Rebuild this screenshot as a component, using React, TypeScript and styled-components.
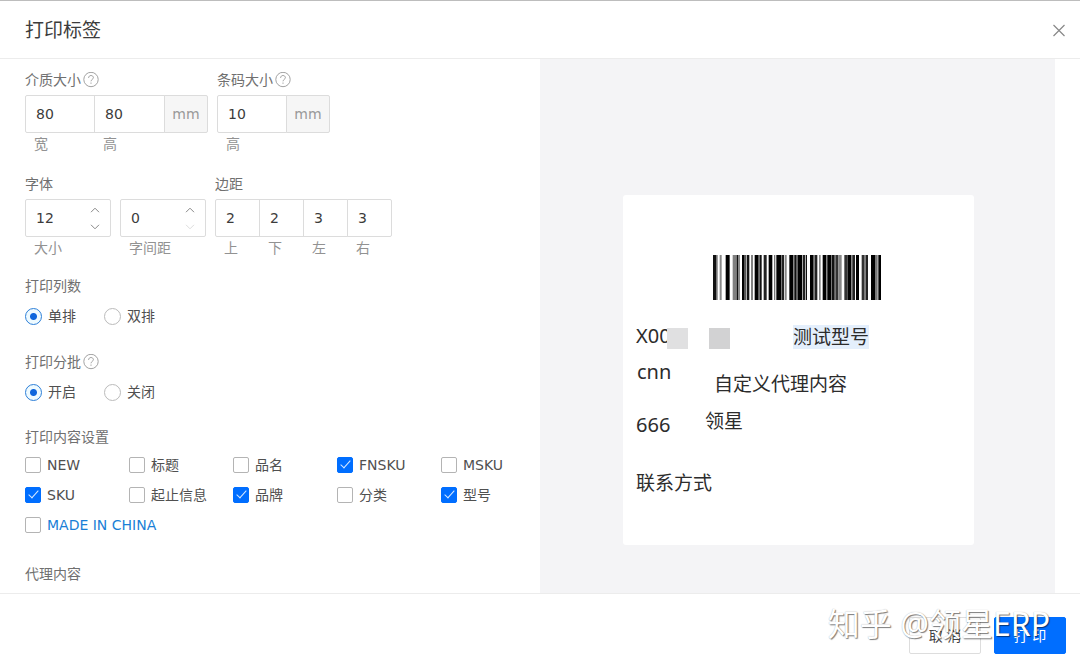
import React, { useState } from "react";
import styled, { createGlobalStyle } from "styled-components";

const uiFont = `"DejaVu Sans", "Noto Sans CJK SC", sans-serif`;
const labelFont = `"Noto Sans", "Noto Sans CJK SC", sans-serif`;
const blue = "#006eff";
const line = "#dcdcdc";

const GlobalStyle = createGlobalStyle`
  *, *::before, *::after { box-sizing: border-box; }
  body { margin: 0; background: #fff; font: 14px/22px ${uiFont}; color: #505050; }
  button, input { font: inherit; color: inherit; }
`;

const Dialog = styled.div`
  display: flex;
  flex-direction: column;
  height: 100vh;
  overflow: hidden;
  border-top: 1px solid #bdbdbd;
`;

const Header = styled.header`
  display: flex;
  align-items: center;
  justify-content: space-between;
  height: 58px;
  flex: none;
  padding: 0 14px 0 25px;
  border-bottom: 1px solid #ececec;
`;

const Title = styled.h1`
  margin: 0;
  font: 400 19px/28px ${labelFont};
  color: #3c3c3c;
`;

const CloseButton = styled.button`
  display: flex;
  padding: 0;
  border: 0;
  background: none;
  color: #888;
`;

const Body = styled.div`
  display: flex;
  flex: 1;
  min-height: 0;
`;

const Form = styled.form`
  flex: 0 0 50%;
  padding: 10px 25px 0;
  overflow: hidden;
`;

const Preview = styled.section`
  flex: 1;
  margin-right: 25px;
  padding: 136px 0 0 2px;
  background: #f4f4f6;
`;

const Section = styled.section<{ $gap: number }>`
  margin-bottom: ${(p) => p.$gap}px;
`;

const Row = styled.div<{ $gap?: number }>`
  display: flex;
  gap: ${(p) => p.$gap ?? 9}px;
`;

const Heading = styled.div<{ $space?: number }>`
  display: flex;
  align-items: center;
  gap: 2px;
  height: 22px;
  margin-bottom: ${(p) => p.$space ?? 4}px;
  color: #707070;
`;

const Group = styled.div`
  display: flex;
  align-items: flex-start;
`;

const Cell = styled.label<{ $width: number }>`
  display: block;
  width: ${(p) => p.$width}px;
  & + & { margin-left: -1px; }
  &:first-child input { border-radius: 2px 0 0 2px; }
  &:last-child input { border-radius: 0 2px 2px 0; }
`;

const TextInput = styled.input`
  display: block;
  width: 100%;
  height: 38px;
  padding: 0 10px;
  border: 1px solid ${line};
  border-radius: 0;
  background: #fff;
  color: #3c3c3c;
  outline: 0;
`;

const Caption = styled.span`
  display: block;
  padding-left: 9px;
  color: #929292;
  white-space: nowrap;
`;

const Unit = styled.span`
  display: flex;
  align-items: center;
  justify-content: center;
  width: 44px;
  height: 38px;
  margin-left: -1px;
  border: 1px solid ${line};
  border-radius: 0 2px 2px 0;
  background: #f6f6f6;
  color: #999;
`;

const StepperBox = styled.div`
  display: flex;
  width: 86px;
  height: 38px;
  border: 1px solid ${line};
  border-radius: 2px;
`;

const StepperInput = styled.input`
  width: 60px;
  padding: 0 0 0 10px;
  border: 0;
  background: none;
  color: #3c3c3c;
  outline: 0;
`;

const StepperArrows = styled.div`
  display: flex;
  flex-direction: column;
  justify-content: center;
`;

const ArrowButton = styled.button`
  display: flex;
  align-items: center;
  height: 17px;
  padding: 0 4px;
  border: 0;
  background: none;
  color: #888;
  &:disabled { color: #ddd; }
`;

const Choice = styled.label<{ $link?: boolean; $width?: number }>`
  display: flex;
  align-items: center;
  gap: 6px;
  width: ${(p) => (p.$width ? `${p.$width}px` : "auto")};
  color: ${(p) => (p.$link ? "#1a7fd6" : "#505050")};
  white-space: nowrap;
`;

const Radio = styled.input`
  appearance: none;
  flex: none;
  width: 17px;
  height: 17px;
  margin: 0;
  border: 1px solid #bbb;
  border-radius: 50%;
  background: #fff;
  &:checked {
    border-color: #2d7fd8;
    background: radial-gradient(circle, #0f66dc 3px, #eefaff 4px);
  }
`;

const Checkbox = styled.input`
  appearance: none;
  display: flex;
  justify-content: center;
  flex: none;
  width: 16px;
  height: 16px;
  margin: 0;
  border: 1px solid #b4b4b4;
  border-radius: 2px;
  background: #fff;
  &:checked { border-color: ${blue}; background: ${blue}; }
  &:checked::after {
    content: "";
    width: 5px;
    height: 10px;
    border: solid #d8eaff;
    border-width: 0 1px 1px 0;
    transform: rotate(42deg);
  }
`;

const CheckGrid = styled.div`
  display: grid;
  grid-template-columns: repeat(5, 104px);
  grid-auto-rows: 30px;
`;

const LabelCard = styled.div`
  position: relative;
  width: 351px;
  height: 350px;
  margin: 0 auto;
  border-radius: 3px;
  background: #fff;
  color: #2c2c2c;
`;

const Placed = styled.div<{ $x: number; $y: number }>`
  position: absolute;
  left: ${(p) => p.$x}px;
  top: ${(p) => p.$y}px;
`;

const CardText = styled(Placed)<{ $selected?: boolean; $latin?: boolean }>`
  font: ${(p) => (p.$latin ? 20 : 19)}px/24px ${labelFont};
  white-space: nowrap;
  background: ${(p) => (p.$selected ? "#e4effc" : "transparent")};
`;

const Mask = styled(Placed)<{ $color: string }>`
  width: 21px;
  height: 21px;
  background: ${(p) => p.$color};
`;

const Footer = styled.footer`
  position: relative;
  display: flex;
  align-items: flex-start;
  justify-content: flex-end;
  gap: 13px;
  flex: none;
  height: 77px;
  padding: 23px 14px 0;
  border-top: 1px solid #ececec;
`;

const FooterButton = styled.button<{ $primary?: boolean }>`
  width: 72px;
  height: 37px;
  padding: 0;
  border: 1px solid ${(p) => (p.$primary ? blue : "#ddd")};
  border-radius: 2px;
  background: ${(p) => (p.$primary ? blue : "#fff")};
  color: ${(p) => (p.$primary ? "#fff" : "#444")};
`;

const Watermark = styled.div`
  position: absolute;
  right: 30px;
  top: 8px;
  font: 32px/44px ${labelFont};
  color: #fff;
  text-shadow: 1px 1px 1px rgba(0, 0, 0, 0.5), 0 0 1px rgba(0, 0, 0, 0.3);
  white-space: nowrap;
  pointer-events: none;
`;

const HelpIcon = () => (
  <svg width="16" height="16" viewBox="0 0 16 16" fill="none" stroke="#a2a2a2" aria-hidden="true">
    <circle cx="8" cy="7.500" r="7.200" />
    <path d="M5.600 5.900c0-1.500 1.100-2.400 2.400-2.400s2.400.9 2.400 2.200c0 1.600-2.400 1.800-2.400 3.600" />
    <path d="M8 10.500v1.300" />
  </svg>
);

const Chevron = ({ down = false }: { down?: boolean }) => (
  <svg width="10" height="6" viewBox="0 0 10 6" fill="none" stroke="currentColor" aria-hidden="true">
    <path d={down ? "M1 .8l4 4 4-4" : "M1 5.200l4-4 4 4"} />
  </svg>
);

const bars: [number, number, string][] = [
  [0, 9, "#111"], [9, 5, "#777"], [20, 6, "#888"], [38, 12, "#000"], [59, 12, "#808080"],
  [71, 4, "#111"], [75, 6, "#888"], [87, 8, "#000"], [95, 4, "#555"], [101, 8, "#111"],
  [115, 4, "#444"], [125, 12, "#000"], [137, 3, "#777"], [140, 6, "#111"], [152, 9, "#222"],
  [167, 11, "#000"], [183, 4, "#777"], [190, 14, "#000"], [204, 3, "#777"], [207, 6, "#222"],
  [215, 6, "#888"], [229, 12, "#000"], [241, 3, "#777"], [244, 7, "#111"], [251, 4, "#666"],
  [255, 13, "#000"], [270, 6, "#222"], [278, 4, "#111"], [291, 11, "#000"], [302, 3, "#888"],
  [305, 8, "#222"], [318, 5, "#888"], [329, 11, "#000"], [340, 3, "#777"], [343, 11, "#000"],
  [354, 3, "#777"], [357, 8, "#111"], [367, 9, "#333"], [376, 10, "#888"], [394, 8, "#333"],
  [403, 12, "#000"], [415, 3, "#777"], [418, 8, "#222"], [429, 9, "#000"], [446, 9, "#333"],
  [455, 3, "#888"], [458, 7, "#222"], [474, 12, "#000"], [486, 8, "#777"], [496, 8, "#000"],
];

const Barcode = () => (
  <svg width="168" height="45" viewBox="0 0 504 132" preserveAspectRatio="none" display="block" role="img" aria-label="FNSKU">
    {bars.map(([x, w, fill]) => (
      <rect key={x} x={x} width={w} height="132" fill={fill} />
    ))}
  </svg>
);

const Field = ({ value, caption, width }: { value: string; caption: string; width: number }) => (
  <Cell $width={width}>
    <TextInput type="text" inputMode="numeric" defaultValue={value} />
    <Caption>{caption}</Caption>
  </Cell>
);

const Stepper = ({ id, initial, caption }: { id: string; initial: number; caption: string }) => {
  const [value, setValue] = useState(initial);
  return (
    <div>
      <StepperBox>
        <StepperInput
          id={id}
          type="text"
          inputMode="numeric"
          value={value}
          onChange={(e) => setValue(Number(e.target.value) || 0)}
        />
        <StepperArrows>
          <ArrowButton type="button" aria-label={`${caption} +`} onClick={() => setValue(value + 1)}>
            <Chevron />
          </ArrowButton>
          <ArrowButton type="button" aria-label={`${caption} -`} disabled={value <= 0} onClick={() => setValue(value - 1)}>
            <Chevron down />
          </ArrowButton>
        </StepperArrows>
      </StepperBox>
      <Caption as="label" htmlFor={id}>{caption}</Caption>
    </div>
  );
};

const RadioPair = ({ name, options }: { name: string; options: string[] }) => (
  <Row $gap={0} role="radiogroup" aria-labelledby={`${name}-title`}>
    {options.map((text, i) => (
      <Choice key={text} $width={79}>
        <Radio type="radio" name={name} defaultChecked={i === 0} />
        {text}
      </Choice>
    ))}
  </Row>
);

const contents: { text: string; on?: boolean; link?: boolean }[] = [
  { text: "NEW" }, { text: "标题" }, { text: "品名" }, { text: "FNSKU", on: true }, { text: "MSKU" },
  { text: "SKU", on: true }, { text: "起止信息" }, { text: "品牌", on: true }, { text: "分类" }, { text: "型号", on: true },
  { text: "MADE IN CHINA", link: true },
];

export default function App() {
  return (
    <>
      <GlobalStyle />
      <Dialog role="dialog" aria-labelledby="dialog-title">
        <Header>
          <Title id="dialog-title">打印标签</Title>
          <CloseButton type="button" aria-label="关闭">
            <svg width="14" height="14" viewBox="0 0 14 14" fill="none" stroke="currentColor" strokeWidth="1.2">
              <path d="M1.500 2l11 11M12.500 2l-11 11" />
            </svg>
          </CloseButton>
        </Header>

        <Body>
          <Form>
            <Section $gap={18}>
              <Row>
                <div>
                  <Heading>介质大小<HelpIcon /></Heading>
                  <Group>
                    <Field value="80" caption="宽" width={70} />
                    <Field value="80" caption="高" width={71} />
                    <Unit>mm</Unit>
                  </Group>
                </div>
                <div>
                  <Heading>条码大小<HelpIcon /></Heading>
                  <Group>
                    <Field value="10" caption="高" width={70} />
                    <Unit>mm</Unit>
                  </Group>
                </div>
              </Row>
            </Section>

            <Section $gap={16}>
              <Row>
                <div>
                  <Heading>字体</Heading>
                  <Row>
                    <Stepper id="font-size" initial={12} caption="大小" />
                    <Stepper id="letter-gap" initial={0} caption="字间距" />
                  </Row>
                </div>
                <div>
                  <Heading>边距</Heading>
                  <Group>
                    <Field value="2" caption="上" width={45} />
                    <Field value="2" caption="下" width={45} />
                    <Field value="3" caption="左" width={45} />
                    <Field value="3" caption="右" width={45} />
                  </Group>
                </div>
              </Row>
            </Section>

            <Section $gap={24}>
              <Heading id="columns-title" $space={8}>打印列数</Heading>
              <RadioPair name="columns" options={["单排", "双排"]} />
            </Section>

            <Section $gap={23}>
              <Heading id="batch-title" $space={8}>打印分批<HelpIcon /></Heading>
              <RadioPair name="batch" options={["开启", "关闭"]} />
            </Section>

            <Section $gap={23}>
              <Heading $space={2}>打印内容设置</Heading>
              <CheckGrid>
                {contents.map(({ text, on, link }) => (
                  <Choice key={text} $link={link}>
                    <Checkbox type="checkbox" defaultChecked={on} />
                    {text}
                  </Choice>
                ))}
              </CheckGrid>
            </Section>

            <Heading>代理内容</Heading>
          </Form>

          <Preview>
            <LabelCard>
              <Placed $x={90} $y={60}><Barcode /></Placed>
              <CardText $x={13} $y={129} $latin>X00</CardText>
              <Mask $x={44} $y={133} $color="#e0e0e1" />
              <Mask $x={86} $y={133} $color="#d2d2d3" />
              <CardText $x={170} $y={130} $selected>测试型号</CardText>
              <CardText $x={14} $y={165} $latin>cnn</CardText>
              <CardText $x={91} $y={177}>自定义代理内容</CardText>
              <CardText $x={13} $y={218} $latin>666</CardText>
              <CardText $x={82} $y={214}>领星</CardText>
              <CardText $x={13} $y={276}>联系方式</CardText>
            </LabelCard>
          </Preview>
        </Body>

        <Footer>
          <FooterButton type="button">取 消</FooterButton>
          <FooterButton type="button" $primary>打 印</FooterButton>
          <Watermark>知乎 @领星ERP</Watermark>
        </Footer>
      </Dialog>
    </>
  );
}
